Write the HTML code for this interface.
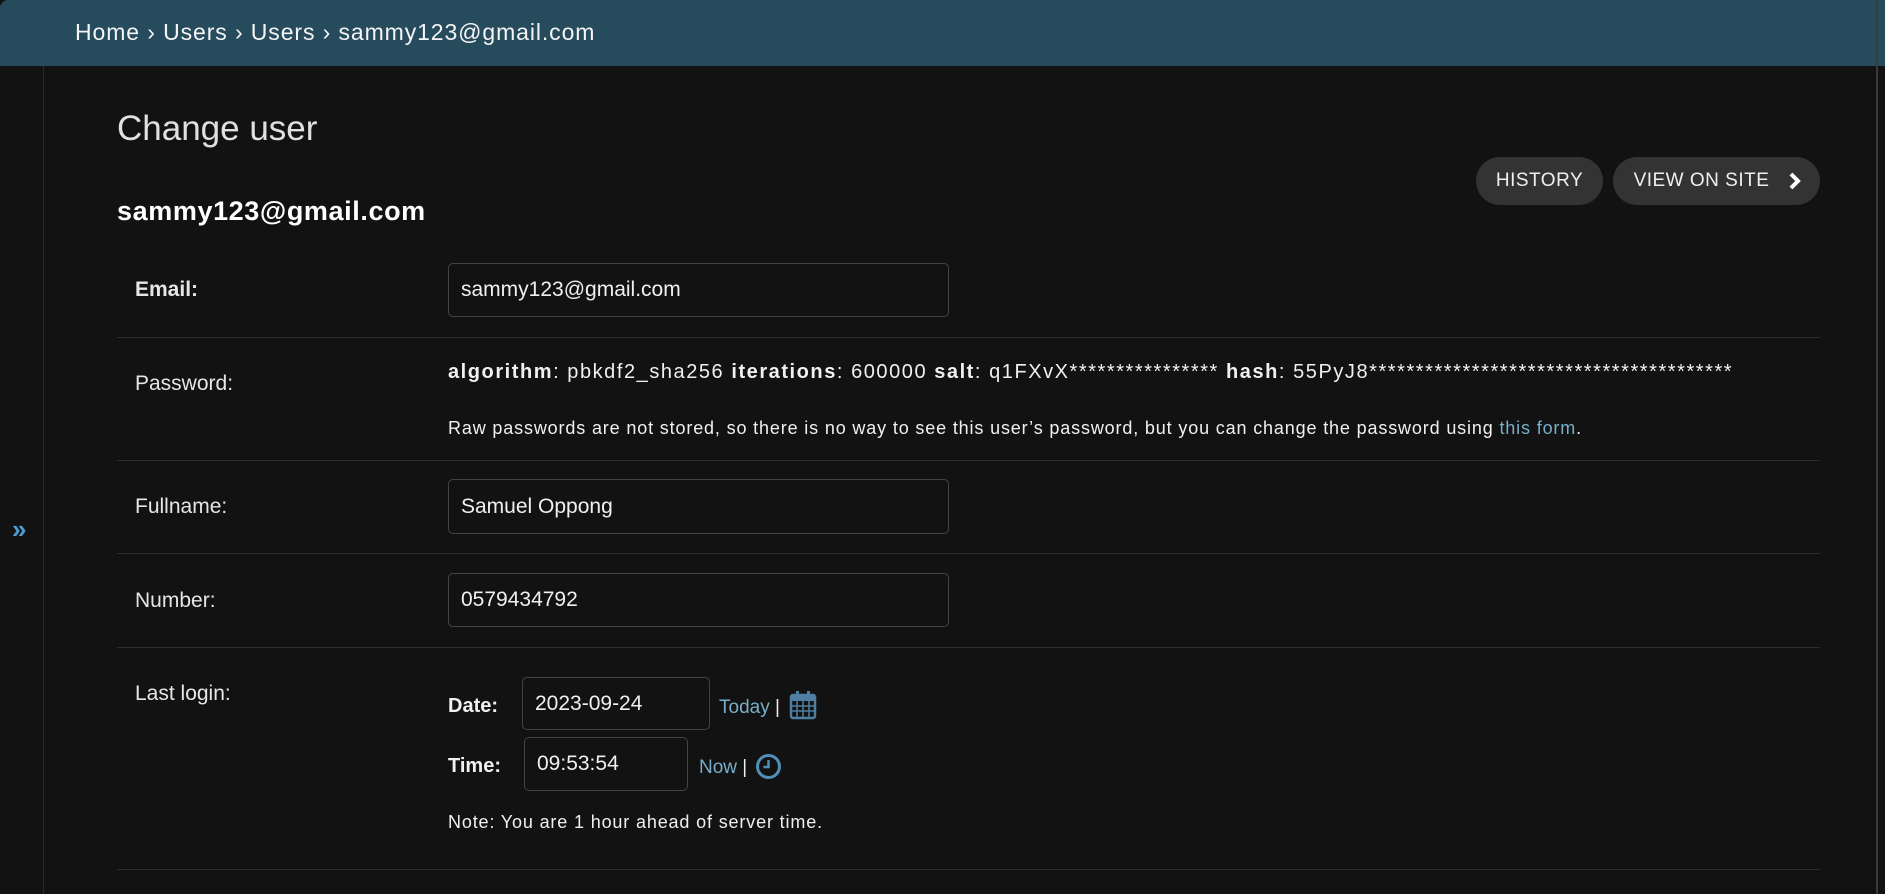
<!DOCTYPE html>
<html><head><meta charset="utf-8"><style>
*{box-sizing:border-box;margin:0;padding:0}
body{width:1885px;height:894px;background:#121212;color:#f0f0f0;font-family:"Liberation Sans",sans-serif;position:relative;overflow:hidden}
.hdr{position:absolute;left:0;top:0;width:1885px;height:66px;background:#264b5d;border-top-left-radius:8px}
.bc{position:absolute;left:75px;top:19px;font-size:23px;color:#f5f5f5;letter-spacing:0.9px}
.side{position:absolute;left:43px;top:66px;width:1px;height:828px;background:#2a2a2a}
.tog{position:absolute;left:12px;top:514px;font-size:26px;font-weight:bold;color:#4a9fd6}
.rb{position:absolute;left:1876px;top:0;width:2px;height:894px;background:#3a3a3a}
.a{position:absolute;white-space:nowrap}
h1{position:absolute;left:117px;top:109px;font-size:35px;font-weight:normal;color:#e0e0e0}
h2{position:absolute;left:117px;top:196px;font-size:27px;font-weight:bold;color:#fff;letter-spacing:0.6px}
.btn{position:absolute;top:157px;height:48px;border-radius:24px;background:#333;color:#f0f0f0;font-size:19px;line-height:48px;text-align:center;letter-spacing:0.5px}
.line{position:absolute;left:117px;width:1703px;height:1px;background:#2c2c2c}
.lbl{position:absolute;left:135px;font-size:21px;color:#e6e6e6}
.inp{position:absolute;border:1px solid #444;border-radius:5px;background:#121212;font-size:21px;padding-left:12px;color:#f0f0f0;display:flex;align-items:center}
.lk{color:#79aec8}
</style></head><body>
<div class="hdr"><div class="bc">Home › Users › Users › sammy123@gmail.com</div></div>
<div class="side"></div>
<div class="tog">»</div>
<div class="rb"></div>
<h1>Change user</h1>
<h2>sammy123@gmail.com</h2>
<div class="btn" style="left:1476px;width:127px">HISTORY</div>
<div class="btn" style="left:1613px;width:207px;padding-right:30px">VIEW ON SITE<svg style="position:absolute;right:18px;top:14px" width="14" height="20" viewBox="0 0 14 20"><path d="M3 3l7 7-7 7" stroke="#fff" stroke-width="4" fill="none"/></svg></div>

<div class="lbl" style="top:278px;font-weight:bold">Email:</div>
<div class="inp" style="left:448px;top:263px;width:501px;height:54px">sammy123@gmail.com</div>
<div class="line" style="top:337px"></div>

<div class="lbl" style="top:372px">Password:</div>
<div class="a" style="left:448px;top:361px;font-size:20px;letter-spacing:1.55px"><b>algorithm</b>: pbkdf2_sha256 <b>iterations</b>: 600000 <b>salt</b>: q1FXvX**************** <b>hash</b>: 55PyJ8***************************************</div>
<div class="a" style="left:448px;top:418px;font-size:18px;letter-spacing:0.85px">Raw passwords are not stored, so there is no way to see this user’s password, but you can change the password using <span class="lk">this form</span>.</div>
<div class="line" style="top:460px"></div>

<div class="lbl" style="top:495px">Fullname:</div>
<div class="inp" style="left:448px;top:479px;width:501px;height:55px">Samuel Oppong</div>
<div class="line" style="top:553px"></div>

<div class="lbl" style="top:589px">Number:</div>
<div class="inp" style="left:448px;top:573px;width:501px;height:54px">0579434792</div>
<div class="line" style="top:647px"></div>

<div class="lbl" style="top:682px">Last login:</div>
<div class="a" style="left:448px;top:695px;font-size:20px;font-weight:bold">Date:</div>
<div class="inp" style="left:522px;top:677px;width:188px;height:53px">2023-09-24</div>
<div class="a lk" style="left:719px;top:697px;font-size:19px">Today <span style="color:#eee">|</span></div>
<svg class="a" style="left:789px;top:690px" width="28" height="30" viewBox="0 0 28 30"><rect x="2" y="5" width="24" height="23" rx="2" fill="none" stroke="#4f7fa0" stroke-width="2.5"/><rect x="2" y="5" width="24" height="6" fill="#4f7fa0"/><rect x="7" y="1" width="3" height="7" fill="#4f7fa0"/><rect x="18" y="1" width="3" height="7" fill="#4f7fa0"/><path d="M2 16h24M2 21h24M8 11v17M14 11v17M20 11v17" stroke="#4f7fa0" stroke-width="1.5"/></svg>
<div class="a" style="left:448px;top:755px;font-size:20px;font-weight:bold">Time:</div>
<div class="inp" style="left:524px;top:737px;width:164px;height:54px">09:53:54</div>
<div class="a lk" style="left:699px;top:757px;font-size:19px">Now <span style="color:#eee">|</span></div>
<svg class="a" style="left:755px;top:753px" width="27" height="27" viewBox="0 0 27 27"><circle cx="13.5" cy="13.5" r="11" fill="none" stroke="#4f8fb8" stroke-width="3"/><path d="M13.5 7v7h-5" stroke="#4f8fb8" stroke-width="2.5" fill="none"/></svg>
<div class="a" style="left:448px;top:812px;font-size:18px;letter-spacing:0.85px">Note: You are 1 hour ahead of server time.</div>
<div class="line" style="top:869px"></div>
</body></html>
